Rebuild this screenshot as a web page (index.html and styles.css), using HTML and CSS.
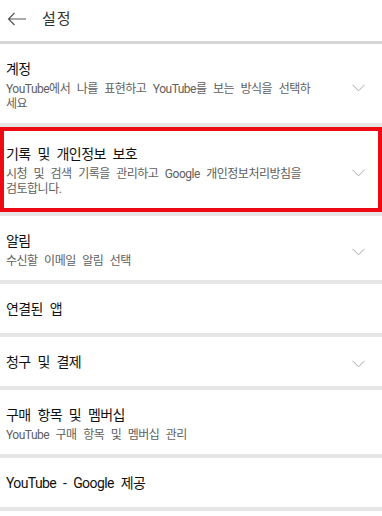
FILE: index.html
```html
<!DOCTYPE html>
<html lang="ko">
<head>
<meta charset="utf-8">
<title>설정</title>
<link rel="stylesheet" href="styles.css">
</head>
<body>
<header class="topbar">
  <svg class="back" width="20" height="14" viewBox="0 0 20 14" aria-hidden="true">
    <path d="M19 7H1.5M7.5 1L1.5 7l6 6" fill="none" stroke="#555" stroke-width="1.2"/>
  </svg>
  <h1 class="page-title">설정</h1>
</header>
<main class="list">
  <section class="item">
    <div class="text">
      <div class="item-title">계정</div>
      <div class="item-sub">YouTube에서 나를 표현하고 YouTube를 보는 방식을 선택하세요</div>
    </div>
    <svg class="chev" width="13" height="8" viewBox="0 0 13 8" aria-hidden="true"><path d="M0.5 0.8L6.5 6.8L12.5 0.8" fill="none" stroke="#a8a8a8" stroke-width="1"/></svg>
  </section>
  <section class="item item--highlight">
    <div class="text">
      <div class="item-title">기록 및 개인정보 보호</div>
      <div class="item-sub">시청 및 검색 기록을 관리하고 Google 개인정보처리방침을 검토합니다.</div>
    </div>
    <svg class="chev" width="13" height="8" viewBox="0 0 13 8" aria-hidden="true"><path d="M0.5 0.8L6.5 6.8L12.5 0.8" fill="none" stroke="#a8a8a8" stroke-width="1"/></svg>
  </section>
  <section class="item">
    <div class="text">
      <div class="item-title">알림</div>
      <div class="item-sub">수신할 이메일 알림 선택</div>
    </div>
    <svg class="chev" width="13" height="8" viewBox="0 0 13 8" aria-hidden="true"><path d="M0.5 0.8L6.5 6.8L12.5 0.8" fill="none" stroke="#a8a8a8" stroke-width="1"/></svg>
  </section>
  <section class="item item--single">
    <div class="text">
      <div class="item-title">연결된 앱</div>
    </div>
  </section>
  <section class="item item--single">
    <div class="text">
      <div class="item-title">청구 및 결제</div>
    </div>
    <svg class="chev" width="13" height="8" viewBox="0 0 13 8" aria-hidden="true"><path d="M0.5 0.8L6.5 6.8L12.5 0.8" fill="none" stroke="#a8a8a8" stroke-width="1"/></svg>
  </section>
  <section class="item">
    <div class="text">
      <div class="item-title">구매 항목 및 멤버십</div>
      <div class="item-sub">YouTube 구매 항목 및 멤버십 관리</div>
    </div>
  </section>
  <section class="item item--single">
    <div class="text">
      <div class="item-title">YouTube - Google 제공</div>
    </div>
  </section>
</main>
</body>
</html>
```

FILE: styles.css
```css
* { box-sizing: border-box; }

html, body {
  margin: 0;
  padding: 0;
  background: #ffffff;
}

body {
  font-family: Roboto, "Noto Sans CJK KR", "Noto Sans", sans-serif;
  color: #111111;
}

.topbar {
  display: flex;
  align-items: center;
  height: 44px;
  padding: 0 0 3px 7px;
  border-bottom: 3px solid #d6d6d6;
  box-shadow: 0 1px 2px rgba(0, 0, 0, 0.08);
}

.back {
  display: block;
  flex: none;
}

.page-title {
  margin: 0 0 0 15px;
  font-size: 15px;
  font-weight: 400;
  line-height: 20px;
  color: #333333;
  letter-spacing: 1px;
}

.list {
  display: flex;
  flex-direction: column;
  gap: 4px;
  background: #e6e6e6;
  padding-bottom: 4px;
}

.item {
  display: flex;
  align-items: center;
  background: #ffffff;
  padding: 15px 17px 11px 6px;
}

.item--single {
  padding-top: 15px;
  padding-bottom: 14px;
}

.item--highlight {
  border: 4px solid #ee0a12;
  padding: 13px 13px 11px 2px;
}

.text {
  flex: 1;
  min-width: 0;
  max-width: 311px;
}

.item-title {
  font-size: 14px;
  line-height: 20px;
  color: #111111;
  letter-spacing: -0.6px;
  word-spacing: 4px;
}

.item-sub {
  margin-top: 3px;
  font-size: 12px;
  line-height: 15px;
  color: #606060;
  letter-spacing: -0.5px;
  word-spacing: 4px;
}

.chev {
  display: block;
  flex: none;
  margin-left: auto;
  margin-top: 4px;
}
```
